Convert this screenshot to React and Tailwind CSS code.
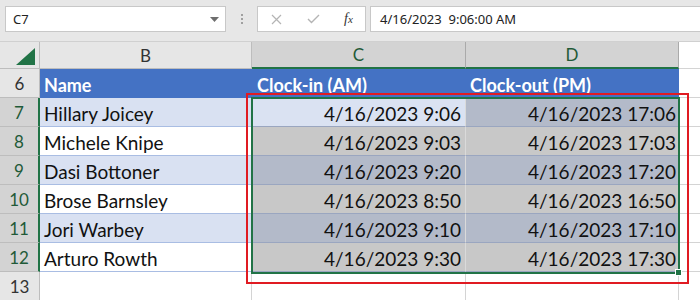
import React from "react";

const rows = [
  { n: 7, name: "Hillary Joicey", a: "4/16/2023 9:06", b: "4/16/2023 17:06", band: true },
  { n: 8, name: "Michele Knipe", a: "4/16/2023 9:03", b: "4/16/2023 17:03", band: false },
  { n: 9, name: "Dasi Bottoner", a: "4/16/2023 9:20", b: "4/16/2023 17:20", band: true },
  { n: 10, name: "Brose Barnsley", a: "4/16/2023 8:50", b: "4/16/2023 16:50", band: false },
  { n: 11, name: "Jori Warbey", a: "4/16/2023 9:10", b: "4/16/2023 17:10", band: true },
  { n: 12, name: "Arturo Rowth", a: "4/16/2023 9:30", b: "4/16/2023 17:30", band: false },
];

function TopBar() {
  return (
    <div className="h-[42px] bg-[#e7e7e7] border-b border-[#d0d0d0] flex items-start pt-[6px] pl-[5px] font-[family-name:'Noto_Sans',sans-serif]">
      <div className="w-[221px] h-[26px] bg-white border border-[#c8c8c8] flex items-center justify-between pl-[7px] pr-[6px]">
        <span className="text-[13px] text-[#222] leading-none">C7</span>
        <svg width="9" height="5" viewBox="0 0 9 5">
          <polygon points="0,0 9,0 4.5,5" fill="#6e6e6e" />
        </svg>
      </div>
      <div className="w-[31px] h-[26px] flex flex-col items-center justify-center gap-[2px]">
        <span className="w-[2px] h-[2px] bg-[#a0a0a0]" />
        <span className="w-[2px] h-[2px] bg-[#a0a0a0]" />
        <span className="w-[2px] h-[2px] bg-[#a0a0a0]" />
      </div>
      <div className="w-[109px] h-[26px] bg-white border border-[#c8c8c8] flex items-center">
        <div className="w-[37px] flex justify-center">
          <svg width="11" height="11" viewBox="0 0 11 11">
            <path d="M1 1 L10 10 M10 1 L1 10" stroke="#b4b4b4" strokeWidth="1.2" />
          </svg>
        </div>
        <div className="w-[37px] flex justify-center">
          <svg width="13" height="10" viewBox="0 0 13 10">
            <path d="M1 5 L4.5 8.5 L12 1" stroke="#b4b4b4" strokeWidth="1.4" fill="none" />
          </svg>
        </div>
        <div className="w-[33px] flex justify-center">
          <span className="font-[family-name:'Liberation_Serif',serif] italic text-[14px] text-[#333] leading-none">
            f<span className="text-[11px]">x</span>
          </span>
        </div>
      </div>
      <div className="ml-[4px] flex-1 h-[26px] bg-white border border-[#c8c8c8] border-r-0 flex items-center pl-[9px]">
        <span className="text-[13px] text-[#222] leading-none whitespace-pre">4/16/2023  9:06:00 AM</span>
      </div>
    </div>
  );
}

function Sheet() {
  const hdr = "text-[17px] leading-none flex items-center justify-center box-border";
  const data = "text-[19px] leading-none flex items-center box-border pt-[3px] text-[#111]";
  const blue = "bg-[#4472c4] text-white font-bold text-[18px] leading-none flex items-center pt-[2px]";
  return (
    <div className="relative font-[family-name:Lato,sans-serif]">
      <div className="grid grid-cols-[40px_212px_214px_213px_21px] grid-rows-[27px_repeat(8,29px)]">
        {/* header row */}
        <div className="bg-[#e6e6e6] border-r border-b border-[#bdbdbd] box-border flex items-end justify-end pr-[4px] pb-[3px]">
          <svg width="19" height="17" viewBox="0 0 19 17">
            <polygon points="19,0 19,17 0,17" fill="#217346" />
          </svg>
        </div>
        <div className={`${hdr} bg-[#e6e6e6] border-r border-b border-[#bdbdbd] text-[#333]`}>B</div>
        <div className={`${hdr} bg-[#d3d3d3] border-r border-r-[#aaaaaa] border-b-2 border-b-[#217346] text-[#1f5a38]`}>C</div>
        <div className={`${hdr} bg-[#d3d3d3] border-r border-r-[#aaaaaa] border-b-2 border-b-[#217346] text-[#1f5a38]`}>D</div>
        <div className="bg-white border-b border-[#d4d4d4] box-border" />

        {/* row 6 */}
        <div className={`${hdr} bg-[#e6e6e6] border-r border-b border-[#bdbdbd] text-[#333]`}>6</div>
        <div className={`${blue} pl-[4px]`}>Name</div>
        <div className={`${blue} pl-[5px]`}>Clock-in (AM)</div>
        <div className={`${blue} pl-[4px]`}>Clock-out (PM)</div>
        <div className="bg-white border-b border-[#d4d4d4] box-border" />

        {rows.map((r) => (
          <React.Fragment key={r.n}>
            <div className={`${hdr} bg-[#d3d3d3] border-r-2 border-r-[#217346] border-b border-b-[#bdbdbd] text-[#1f5a38]`}>{r.n}</div>
            <div className={`${data} pl-[4px] border-b border-b-[#a9bde3] ${r.band ? "bg-[#d9e1f2]" : "bg-white"}`}>{r.name}</div>
            <div
              className={`${data} justify-end pr-[4px] border-b border-b-[#9aa6c0] border-r border-r-[#dadada] ${
                r.n === 7 ? "bg-[#dae2f2]" : r.band ? "bg-[#b3bac9]" : "bg-[#c8c8c8]"
              }`}
            >
              {r.a}
            </div>
            <div
              className={`${data} justify-end pr-[3px] border-b border-b-[#9aa6c0] ${r.band ? "bg-[#b3bac9]" : "bg-[#c8c8c8]"}`}
            >
              {r.b}
            </div>
            <div className="bg-white border-b border-l border-[#d4d4d4] box-border" />
          </React.Fragment>
        ))}

        {/* row 13 */}
        <div className={`${hdr} bg-[#e6e6e6] border-r border-b border-[#bdbdbd] text-[#333]`}>13</div>
        <div className="bg-white border-r border-b border-[#d4d4d4] box-border" />
        <div className="bg-white border-r border-b border-[#d4d4d4] box-border" />
        <div className="bg-white border-r border-b border-[#d4d4d4] box-border" />
        <div className="bg-white border-b border-[#d4d4d4] box-border" />
      </div>

      {/* selection border */}
      <div className="absolute left-[251px] top-[55px] w-[429px] h-[177px] border-2 border-[#217346] pointer-events-none" />
      <div className="absolute left-[675px] top-[227px] w-[7px] h-[7px] bg-[#217346] border border-white" />
      {/* red highlight */}
      <div className="absolute left-[246px] top-[51px] w-[443px] h-[191px] border-2 border-[#e01b22] pointer-events-none" />
    </div>
  );
}

export default function App() {
  return (
    <div className="w-[700px] h-[300px] overflow-hidden bg-white">
      <TopBar />
      <Sheet />
    </div>
  );
}
